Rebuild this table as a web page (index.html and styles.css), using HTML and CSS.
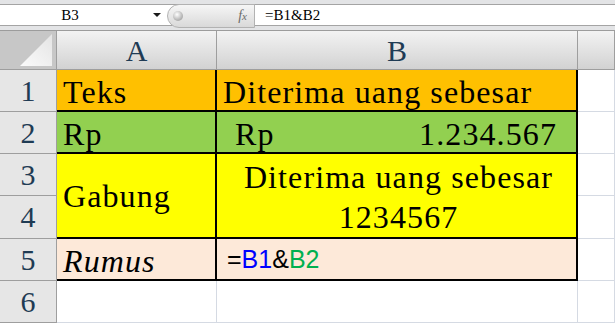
FILE: index.html
```html
<!DOCTYPE html>
<html lang="id">
<head>
    <meta charset="UTF-8">
    <title>Gabung Teks</title>
    <link rel="stylesheet" href="styles.css">
</head>
<body>
    <div class="formula-bar">
        <div class="fbar-row">
            <div class="name-box">
                <span class="cell-ref">B3</span>
                <span class="drop"></span>
            </div>
            <div class="fx-capsule">
                <span class="knob"></span>
                <span class="fx">f<i>x</i></span>
            </div>
            <div class="formula">=B1&amp;B2</div>
        </div>
    </div>

    <div class="sheet">
        <div class="corner">
            <svg width="32" height="32" viewBox="0 0 32 32">
                <defs>
                    <linearGradient id="tri" x1="0" y1="1" x2="1" y2="0">
                        <stop offset="0" stop-color="#fbfbfb"/>
                        <stop offset="1" stop-color="#e4e4e4"/>
                    </linearGradient>
                </defs>
                <polygon points="32,0 32,32 0,32" fill="url(#tri)"/>
            </svg>
        </div>
        <div class="col-head">A</div>
        <div class="col-head">B</div>
        <div class="col-head"></div>

        <div class="row-head">1</div>
        <div class="cell orange edge">Teks</div>
        <div class="cell orange edge">Diterima uang sebesar</div>
        <div class="cell"></div>

        <div class="row-head">2</div>
        <div class="cell green edge">Rp</div>
        <div class="cell green edge money"><span>Rp</span><span>1.234.567</span></div>
        <div class="cell"></div>

        <div class="row-head">3</div>
        <div class="cell yellow edge merged middle">Gabung</div>
        <div class="cell yellow edge merged wrap">Diterima uang sebesar 1234567</div>
        <div class="cell"></div>

        <div class="row-head">4</div>
        <div class="cell"></div>

        <div class="row-head">5</div>
        <div class="cell peach edge italic">Rumus</div>
        <div class="cell peach edge formula-cell">=<span class="ref-blue">B1</span>&amp;<span class="ref-green">B2</span></div>
        <div class="cell"></div>

        <div class="row-head">6</div>
        <div class="cell"></div>
        <div class="cell"></div>
        <div class="cell"></div>
    </div>
</body>
</html>
```

FILE: styles.css
```css
* { padding: 0; margin: 0; box-sizing: border-box; }
body {
    width: 615px;
    height: 323px;
    overflow: hidden;
    background: #fff;
    font-family: "Liberation Serif", serif;
    color: #000;
}

/* formula bar */
.formula-bar {
    height: 31px;
    padding-top: 4px;
    background: #e3e4e6;
    border-bottom: 1px solid #9c9c9c;
}
.fbar-row {
    height: 22px;
    display: flex;
    background: #fff;
    border-top: 1px solid #a4a4a4;
    border-bottom: 1px solid #a4a4a4;
    font-family: "Liberation Serif", serif;
    font-size: 15px;
}
.name-box { width: 167px; display: flex; align-items: center; }
.cell-ref { width: 140px; text-align: center; }
.drop {
    width: 0;
    height: 0;
    margin-left: 13px;
    border-left: 4px solid transparent;
    border-right: 4px solid transparent;
    border-top: 4px solid #1a1a1a;
}
.fx-capsule {
    width: 88px;
    height: 24px;
    margin-top: -1px;
    display: flex;
    align-items: center;
    border: 1px solid #b2b2b2;
    border-radius: 12px 0 0 12px;
    background: linear-gradient(#f6f6f6, #d9d9d9);
}
.knob {
    width: 10px;
    height: 10px;
    margin-left: 5px;
    border-radius: 50%;
    background: radial-gradient(circle at 40% 35%, #ffffff, #b8b8b8 60%, #8e8e8e);
}
.fx {
    margin-left: auto;
    margin-right: 7px;
    font-style: italic;
    font-size: 14px;
    color: #6b6b6b;
}
.fx i { font-size: 11px; }
.formula { padding-left: 10px; line-height: 20px; }

/* sheet grid */
.sheet {
    display: grid;
    grid-template-columns: 57px 160px 361px 1fr;
    grid-template-rows: 39px 42px 42px 42px 43px 42px 42px;
}
.corner {
    background: #c7c7c7;
    border-right: 1px solid #9e9e9e;
    border-bottom: 1px solid #9e9e9e;
    display: flex;
    justify-content: flex-end;
    align-items: flex-end;
    padding: 0 4px 3px 0;
}
.corner svg { display: block; }
.col-head, .row-head {
    font-size: 30px;
    color: #1f3b54;
    display: flex;
    justify-content: center;
    border-right: 1px solid #9e9e9e;
    border-bottom: 1px solid #9e9e9e;
}
.col-head {
    align-items: flex-end;
    padding-bottom: 1px;
    background: linear-gradient(#f3f3f3, #d2d2d2);
}
.row-head { align-items: center; background: #e6e6e6; }

.cell {
    font-size: 32px;
    letter-spacing: 1.1px;
    line-height: 36px;
    display: flex;
    align-items: flex-end;
    padding: 0 6px;
    border-right: 1px solid #d5dae3;
    border-bottom: 1px solid #d5dae3;
    white-space: nowrap;
}
.cell.edge { border-right: 2px solid #000; border-bottom: 2px solid #000; }
.orange { background: #ffc000; }
.green { background: #92d050; }
.yellow { background: #ffff00; }
.peach { background: #fde9d9; }

.money { justify-content: space-between; padding: 0 19px 0 18px; }
.merged { grid-row: span 2; }
.middle { align-items: center; }
.wrap {
    white-space: normal;
    align-items: center;
    justify-content: center;
    text-align: center;
    line-height: 40px;
    padding: 2px 8px 0 12px;
}
.italic { font-style: italic; }
.formula-cell {
    font-family: "Liberation Sans", sans-serif;
    font-size: 25px;
    letter-spacing: 0;
    padding-left: 10px;
    padding-bottom: 2px;
}
.ref-blue { color: #0000ff; }
.ref-green { color: #00b050; }
```
